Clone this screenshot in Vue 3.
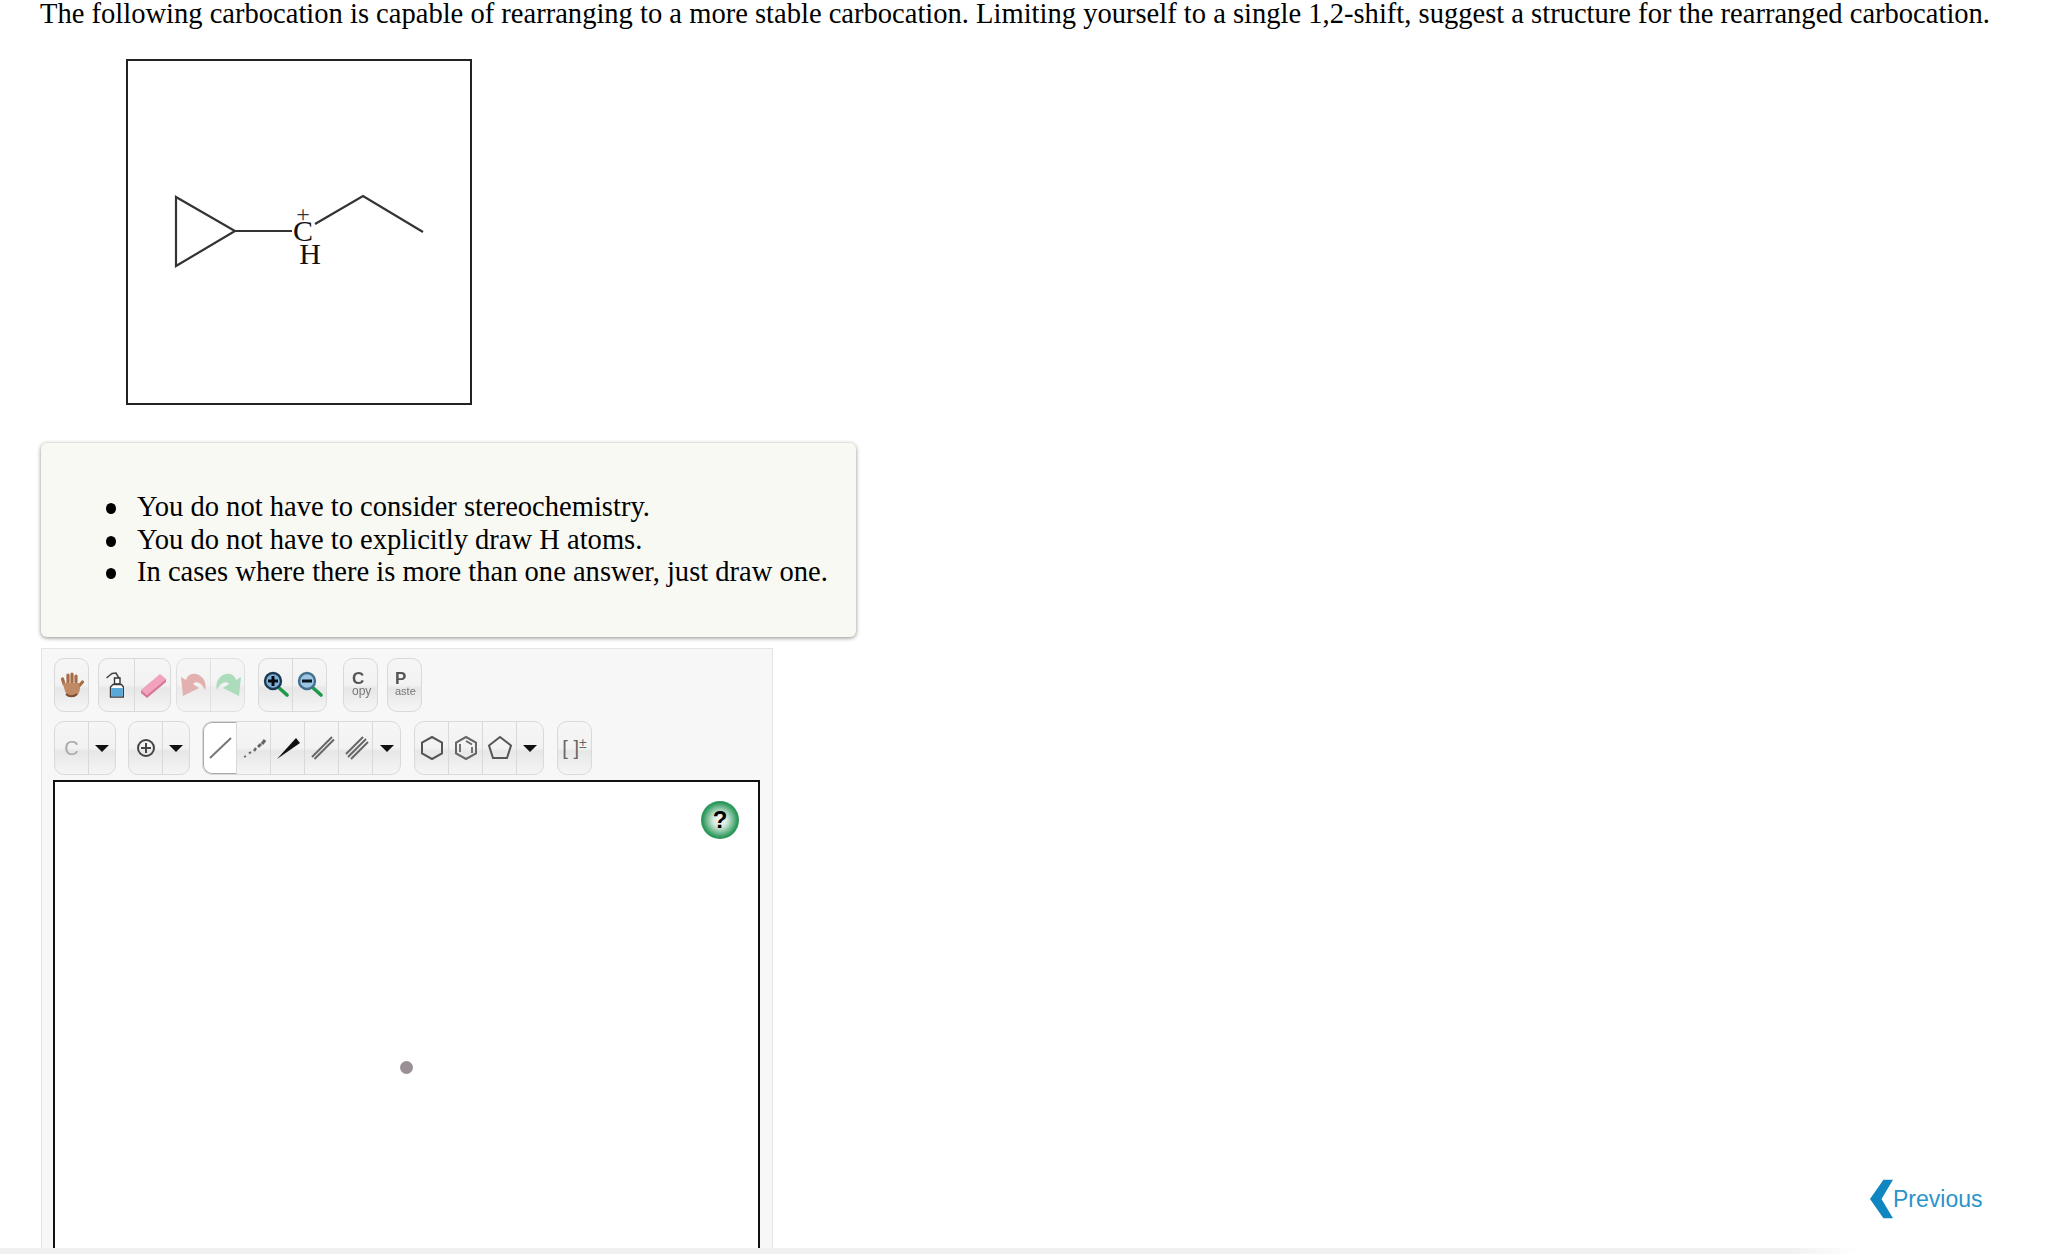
<template>
  <div class="page">
    <div class="question">
      <p class="prompt">The following carbocation is capable of rearranging to a more stable carbocation. Limiting yourself to a single 1,2-shift, suggest a structure for the rearranged carbocation.</p>
      <div class="molecule">
        <svg width="342" height="342" viewBox="128 61 342 342">
          <g fill="none" stroke="#333" stroke-width="2.2" stroke-linejoin="miter">
            <path d="M176 197 L235 231 L176 266 Z" />
            <path d="M235 231 H292" />
            <path d="M315 224 L363 196 L423 232" />
          </g>
          <text x="303" y="241" class="atom" text-anchor="middle">C</text>
          <text x="310" y="264" class="atom" text-anchor="middle">H</text>
          <text x="303" y="222" class="charge" text-anchor="middle">+</text>
        </svg>
      </div>
      <div class="notes">
        <ul>
          <li>You do not have to consider stereochemistry.</li>
          <li>You do not have to explicitly draw H atoms.</li>
          <li>In cases where there is more than one answer, just draw one.</li>
        </ul>
      </div>
      <div class="editor">
        <div class="toolbar">
          <div class="group"><div class="cell">
            <svg class="icon" width="26" height="28" viewBox="0 0 26 28">
              <g stroke="#a86d47" stroke-width="3.2" stroke-linecap="round">
                <path d="M5 13 L3.5 8" /><path d="M9 11 V4" /><path d="M13 11 V3" /><path d="M17 11 V5" /><path d="M20 15 L23.5 11" />
              </g>
              <path d="M4 12 H20 L21 18 C20 24 17 26 12 26 C8 26 6 22 4 12 Z" fill="#c08a64" />
              <path d="M7 23 C10 26 15 26 18 23" stroke="#7d4e30" stroke-width="2" fill="none" />
            </svg>
          </div></div>
          <div class="group">
            <div class="cell wide">
              <svg class="icon bottle" width="18" height="26" viewBox="0 0 18 26">
                <path d="M0.5 6 L6 1.5 L10 1 L13.5 7" fill="none" stroke="#444" stroke-width="1.5" />
                <path d="M8.5 6 H14 V12 H8.5 Z" fill="#fff" stroke="#333" stroke-width="1.4" />
                <path d="M7 12.5 H15.5 L17.5 15 V25 H4.5 V15 Z" fill="#fff" stroke="#3a3a3a" stroke-width="1.4" />
                <rect x="5.2" y="16" width="11.6" height="8.4" fill="#5aa8d8" />
              </svg>
            </div>
            <div class="cell wide">
              <svg class="icon" width="28" height="28" viewBox="0 0 28 28">
                <path d="M2 19 L21 3 L27 8 L8 24 Z" fill="#f3a2bc" />
                <path d="M2 19 L8 24 L8 27 L2 22 Z" fill="#d9739a" />
                <path d="M8 24 L27 8 V11 L8 27 Z" fill="#d9739a" />
              </svg>
            </div>
          </div>
          <div class="group faded">
            <div class="cell">
              <svg class="icon" width="28" height="28" viewBox="0 0 28 28">
                <path d="M1 6 L3 25 L19 17 L13 13 C16 9 22 12 25 19 C28 10 20 1 12 3 C9 3.5 7 6 6 9 Z" fill="#dc9a98" />
              </svg>
            </div>
            <div class="cell">
              <svg class="icon" width="28" height="28" viewBox="0 0 28 28">
                <path d="M27 6 L25 25 L9 17 L15 13 C12 9 6 12 3 19 C0 10 8 1 16 3 C19 3.5 21 6 22 9 Z" fill="#93d4a8" />
              </svg>
            </div>
          </div>
          <div class="group">
            <div class="cell">
              <svg class="icon" width="28" height="28" viewBox="0 0 28 28">
                <path d="M15 15 L25 24" stroke="#1f9a4a" stroke-width="3.6" stroke-linecap="round" />
                <circle cx="11" cy="10" r="8" fill="#7fb2d8" stroke="#1e3a52" stroke-width="2.4" />
                <path d="M6 10 H16 M11 5 V15" stroke="#070c14" stroke-width="3" />
              </svg>
            </div>
            <div class="cell">
              <svg class="icon" width="28" height="28" viewBox="0 0 28 28">
                <path d="M15 15 L25 24" stroke="#1f9a4a" stroke-width="3.6" stroke-linecap="round" />
                <circle cx="11" cy="10" r="8" fill="#9cc6e4" stroke="#44708f" stroke-width="2.4" />
                <path d="M6 10 H16" stroke="#0a1420" stroke-width="3" />
              </svg>
            </div>
          </div>
          <div class="group gap-left"><div class="cell stacked copy"><b>C</b><span>opy</span></div></div>
          <div class="group"><div class="cell stacked paste"><b>P</b><span>aste</span></div></div>
        </div>
        <div class="toolbar">
          <div class="group">
            <div class="cell element">C</div>
            <div class="cell narrow"><i class="caret"></i></div>
          </div>
          <div class="group gap-small">
            <div class="cell">
              <svg class="icon" width="20" height="20" viewBox="0 0 20 20">
                <circle cx="10" cy="10" r="8" fill="none" stroke="#444" stroke-width="2" />
                <path d="M5 10 H15 M10 5 V15" stroke="#444" stroke-width="2" />
              </svg>
            </div>
            <div class="cell narrow"><i class="caret"></i></div>
          </div>
          <div class="group gap-small bonds">
            <div class="cell active">
              <svg class="icon" width="26" height="26" viewBox="0 0 26 26">
                <path d="M3 23 L24 3" stroke="#777" stroke-width="2" />
              </svg>
            </div>
            <div class="cell">
              <svg class="icon" width="26" height="26" viewBox="0 0 26 26">
                <g stroke="#666"><path d="M3 22 L5 21" stroke-width="1.6" /><path d="M8 18.5 L10 17" stroke-width="2" /><path d="M13 16 L15 13" stroke-width="2.4" /><path d="M17 12 L20 9" stroke-width="2.8" /><path d="M21 9 L24 5" stroke-width="3.2" /></g>
              </svg>
            </div>
            <div class="cell">
              <svg class="icon" width="26" height="26" viewBox="0 0 26 26">
                <path d="M2 24 L21 3 L25 8 Z" fill="#111" />
              </svg>
            </div>
            <div class="cell">
              <svg class="icon nudge" width="26" height="26" viewBox="0 0 26 26">
                <g stroke="#666" stroke-width="2"><path d="M2 22 L22 2" /><path d="M4.5 24 L24 4.5" /></g>
              </svg>
            </div>
            <div class="cell">
              <svg class="icon nudge" width="26" height="26" viewBox="0 0 26 26">
                <g stroke="#666" stroke-width="2"><path d="M2 19 L19 2" /><path d="M4 22 L22 4" /><path d="M7 24 L24 7" /></g>
              </svg>
            </div>
            <div class="cell narrow"><i class="caret"></i></div>
          </div>
          <div class="group gap-small rings">
            <div class="cell">
              <svg class="icon" width="24" height="26" viewBox="0 0 24 26">
                <path d="M12 2 L22 7.5 V18.5 L12 24 L2 18.5 V7.5 Z" fill="none" stroke="#555" stroke-width="2" />
              </svg>
            </div>
            <div class="cell">
              <svg class="icon" width="24" height="26" viewBox="0 0 24 26">
                <path d="M12 2 L22 7.5 V18.5 L12 24 L2 18.5 V7.5 Z" fill="none" stroke="#666" stroke-width="2" />
                <path d="M12 6 L18 9.5 M18 12 V18 M6 17 V9" fill="none" stroke="#666" stroke-width="1.8" />
              </svg>
            </div>
            <div class="cell">
              <svg class="icon" width="26" height="26" viewBox="0 0 26 26">
                <path d="M13 2 L24 10.5 L20 23 H6 L2 10.5 Z" fill="none" stroke="#555" stroke-width="2" />
              </svg>
            </div>
            <div class="cell narrow"><i class="caret"></i></div>
          </div>
          <div class="group gap-small">
            <div class="cell charge-tool"><span class="brackets">[ ]</span><sup>±</sup></div>
          </div>
        </div>
        <div class="canvas">
          <div class="help">?</div>
          <i class="dot"></i>
        </div>
      </div>
    </div>
    <a class="previous">
      <svg width="23" height="40" viewBox="0 0 24 40">
        <path d="M14 0 H24 L12 20 L24 40 H14 L0 20 Z" fill="#0f86bf" />
      </svg>
      <span>Previous</span>
    </a>
    <div class="scrollbar"></div>
  </div>
</template>

<script setup>
</script>

<style>
html, body {
  margin: 0;
  background: #fff;
  overflow: hidden;
}
</style>

<style scoped>
.page {
  position: relative;
  height: 1254px;
  overflow: hidden;
  font-family: "Liberation Serif", "Times New Roman", serif;
  color: #000;
}

.question {
  padding-left: 41px;
}

.prompt {
  margin: 0 0 0 -1px;
  width: 1960px;
  font-size: 28.56px;
  line-height: 28px;
  white-space: nowrap;
}

.molecule {
  margin: 31px 0 0 85px;
  width: 342px;
  height: 342px;
  border: 2px solid #222;
}

.molecule svg {
  display: block;
}

.atom {
  font-family: "Liberation Serif", serif;
  font-size: 30px;
  fill: #111;
}

.charge {
  font-family: "Liberation Serif", serif;
  font-size: 24px;
  fill: #333;
}

.notes {
  box-sizing: border-box;
  margin-top: 38px;
  width: 815px;
  height: 194px;
  padding-top: 48px;
  background: #f9f9f4;
  border-radius: 6px;
  box-shadow: 0 1px 4px rgba(0, 0, 0, 0.45);
  font-size: 28.56px;
  line-height: 32.6px;
}

.notes ul {
  margin: 0;
  padding-left: 96px;
  list-style: none;
}

.notes li {
  position: relative;
}

.notes li::before {
  content: "";
  position: absolute;
  left: -31px;
  top: 12px;
  width: 10px;
  height: 11px;
  border-radius: 50%;
  background: #000;
}

.editor {
  box-sizing: border-box;
  margin-top: 11px;
  width: 732px;
  padding: 9px 12px 0;
  background: #f7f7f7;
  border: 1px solid #e4e4e4;
}

.toolbar {
  display: flex;
  height: 54px;
  margin-bottom: 9px;
}

.toolbar + .toolbar {
  margin-bottom: 5px;
}

.group {
  display: flex;
  margin-right: 9px;
  border: 1px solid #d9d9d9;
  border-radius: 10px;
  overflow: hidden;
  background: linear-gradient(#f6f6f6 0%, #f2f2f2 50%, #e7e7e7 56%, #f5f5f5 100%);
}

.gap-left {
  margin-left: 7px;
}

.gap-small {
  margin-left: 3px;
}

.bonds,
.rings {
  margin-right: 10px;
}

.faded {
  opacity: 0.75;
  margin-left: -4px;
  margin-right: 13px;
}

.cell {
  display: flex;
  align-items: center;
  justify-content: center;
  width: 33px;
  border-left: 1px solid #d9d9d9;
}

.cell:first-child {
  border-left: none;
}

.cell.wide {
  width: 35px;
}

.cell.narrow {
  width: 26px;
}

.bonds .cell.narrow {
  width: 27px;
}

.icon {
  filter: blur(0.5px);
}

.bottle {
  margin-left: -3px;
}

.nudge {
  margin-left: 3px;
}

.active {
  background: #fff;
  border-radius: 9px 0 0 9px;
  box-shadow: inset 1px 0 0 #aaa, inset 0 1px 0 #aaa, inset 0 -1px 0 #aaa;
}

.caret {
  width: 0;
  height: 0;
  border-left: 7px solid transparent;
  border-right: 7px solid transparent;
  border-top: 7px solid #111;
}

.element {
  font-family: "Liberation Sans", Arial, sans-serif;
  font-size: 20px;
  color: #aaa;
}

.cell.stacked {
  flex-direction: column;
  align-items: flex-start;
  font-family: "Liberation Sans", Arial, sans-serif;
  color: #555;
  line-height: 12px;
  filter: blur(0.3px);
}

.cell.copy {
  width: 25px;
  padding-left: 8px;
}

.cell.paste {
  width: 26px;
  padding-left: 7px;
}

.stacked b {
  font-size: 17px;
}

.stacked span {
  font-size: 12px;
  color: #777;
}

.paste span {
  font-size: 11px;
}

.charge-tool {
  font-family: "Liberation Sans", Arial, sans-serif;
  color: #666;
  font-size: 20px;
}

.charge-tool sup {
  font-size: 14px;
  line-height: 1;
  margin-top: -10px;
}

.canvas {
  position: relative;
  width: 707px;
  height: 574px;
  margin-left: -1px;
  box-sizing: border-box;
  background: #fff;
  border: 2px solid #111;
}

.help {
  position: absolute;
  top: 19px;
  right: 19px;
  display: flex;
  align-items: center;
  justify-content: center;
  width: 38px;
  height: 38px;
  border-radius: 50%;
  background: radial-gradient(circle, #fff 0%, #cfe6d8 28%, #2f9a5e 64%, #0d7a3c 100%);
  font-family: "Liberation Sans", Arial, sans-serif;
  font-weight: 700;
  font-size: 24px;
}

.dot {
  position: absolute;
  top: 50%;
  left: 50%;
  width: 13px;
  height: 13px;
  margin: -6.5px 0 0 -6.5px;
  border-radius: 50%;
  background: #9a8f96;
}

.previous {
  position: absolute;
  left: 1870px;
  top: 1179px;
  display: flex;
  align-items: center;
  font-family: "Liberation Sans", Arial, sans-serif;
  font-size: 23px;
  color: #2a94cb;
}

.scrollbar {
  position: absolute;
  left: 0;
  bottom: 0;
  width: 1860px;
  height: 6px;
  background: linear-gradient(to right, #f0f0f0 96%, transparent);
}
</style>
